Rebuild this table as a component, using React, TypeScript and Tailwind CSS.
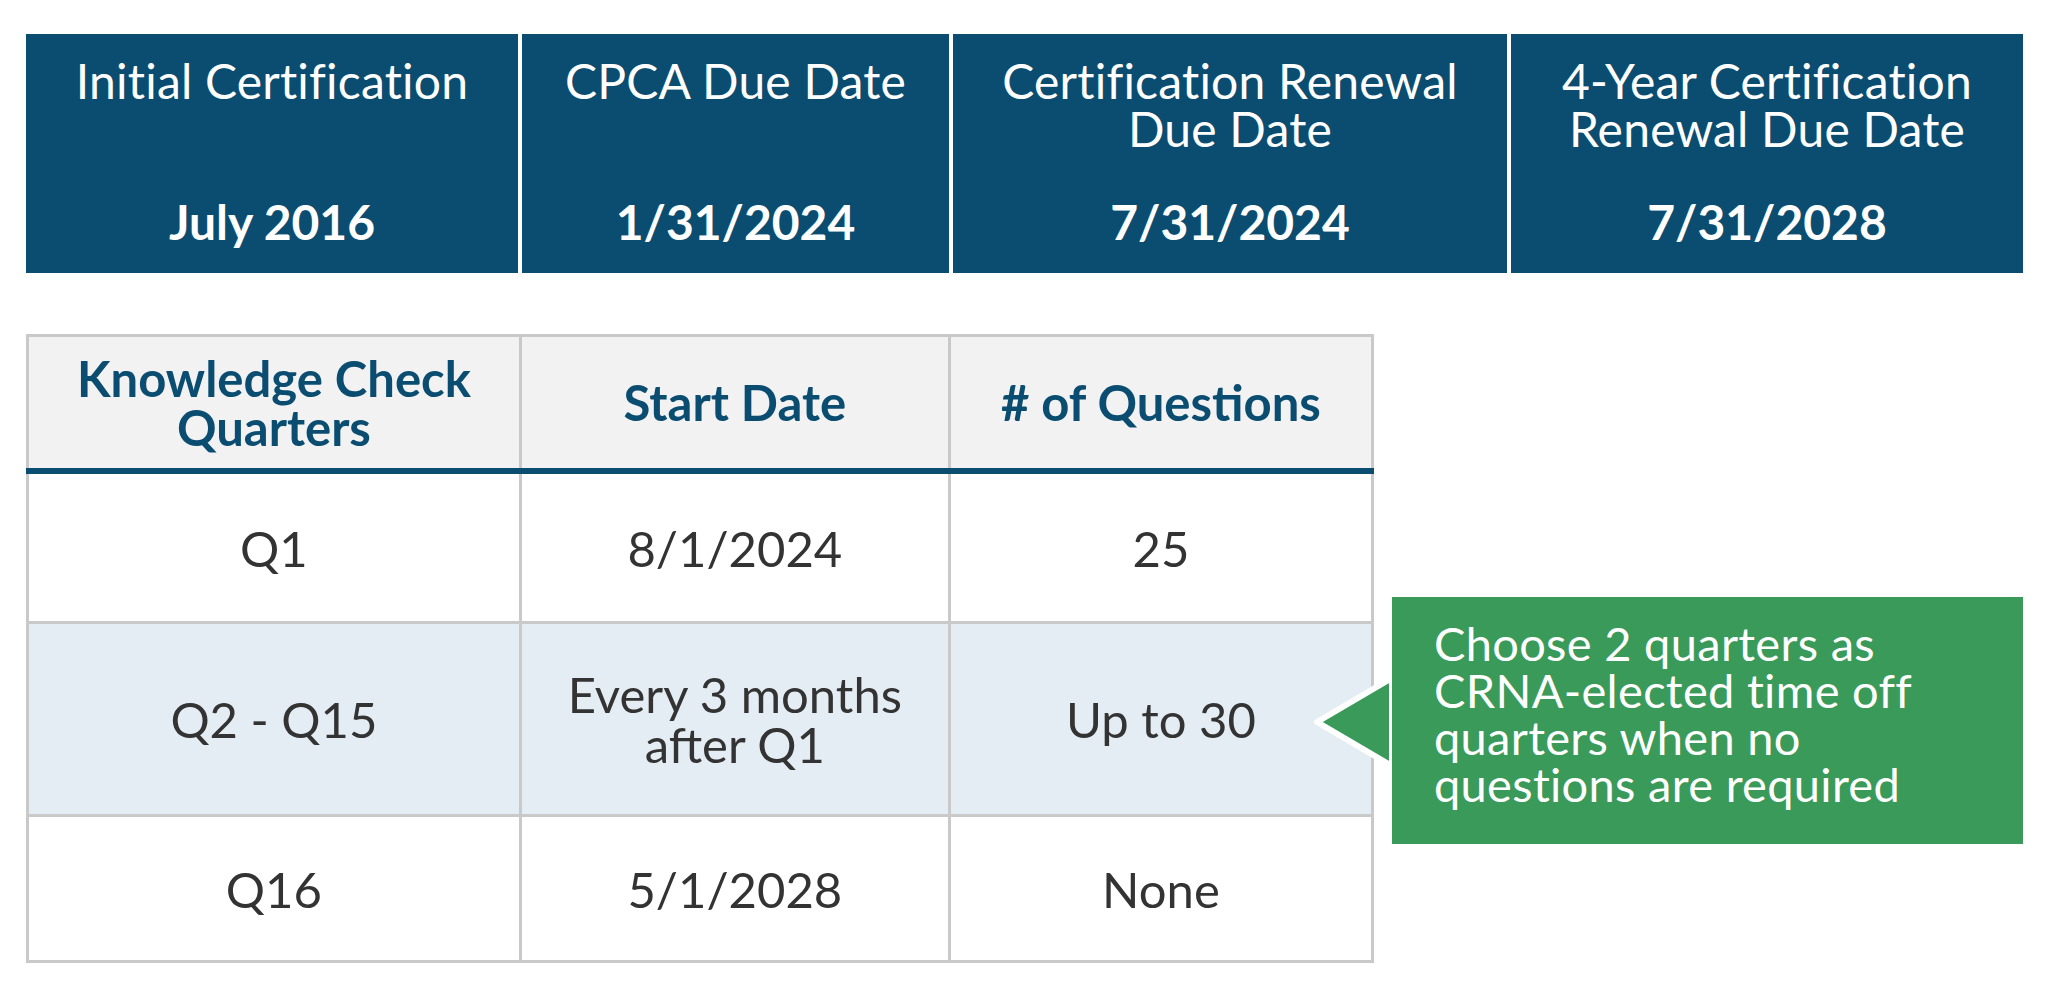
const NAVY = 'bg-[#0b4d71]';

const topCols = [
  { title: ['Initial Certification'], date: 'July 2016', w: 'w-[492px]' },
  { title: ['CPCA Due Date'], date: '1/31/2024', w: 'w-[431px]' },
  { title: ['Certification Renewal', 'Due Date'], date: '7/31/2024', w: 'w-[558px]' },
  { title: ['4-Year Certification', 'Renewal Due Date'], date: '7/31/2028', w: 'w-[516px]' },
];

const rows = [
  { q: 'Q1', start: ['8/1/2024'], n: '25', bg: 'bg-white', h: 'h-[147px]' },
  { q: 'Q2 - Q15', start: ['Every 3 months', 'after Q1'], n: 'Up to 30', bg: 'bg-[#e4edf3]', h: 'h-[193px]' },
  { q: 'Q16', start: ['5/1/2028'], n: 'None', bg: 'bg-white', h: 'h-[146px]' },
];

const colW = ['w-[492px]', 'w-[431px]', 'w-[425px]'];

export default function App() {
  return (
    <div
      className="min-h-[1005px] w-[2048px] bg-white pl-[26px] pt-[34px]"
      style={{ fontFamily: 'Lato, "Open Sans", sans-serif' }}
    >
      {/* due dates */}
      <div className="flex h-[239px] w-[1997px]">
        {topCols.map((c, i) => (
          <div
            key={c.date}
            className={`${c.w} ${NAVY} flex flex-col items-center text-center text-white ${i > 0 ? 'border-l-[4px] border-white' : ''}`}
          >
            <div className="h-[121px] pt-[23px] text-[48px] leading-[48px] tracking-[0.2px]">
              {c.title.map((t) => (
                <div key={t}>{t}</div>
              ))}
            </div>
            <div className="mt-[43px] text-[48px] font-bold leading-[48px]">{c.date}</div>
          </div>
        ))}
      </div>

      <div className="mt-[61px] flex items-start">
        {/* knowledge check table */}
        <div className="w-[1348px] border-[3px] border-[#c9c9c9]">
          <div className="flex h-[131px] bg-[#f2f2f2] text-[49px] font-bold leading-[49px] text-[#0b4d71]">
            <div className={`${colW[0]} flex flex-col items-center justify-center text-center`}>
              <div>Knowledge Check</div>
              <div>Quarters</div>
            </div>
            <div className={`${colW[1]} flex items-center justify-center border-l-[3px] border-[#c9c9c9]`}>Start Date</div>
            <div className={`${colW[2]} flex items-center justify-center border-l-[3px] border-[#c9c9c9]`}># of Questions</div>
          </div>
          <div className="-mx-[3px] h-[6px] bg-[#0b4d71]" />
          {rows.map((r, i) => (
            <div
              key={r.q}
              className={`flex ${r.h} ${r.bg} text-[49px] leading-[50px] text-[#333333] ${i > 0 ? 'border-t-[3px] border-[#c9c9c9]' : ''}`}
            >
              <div className={`${colW[0]} flex items-center justify-center`}>{r.q}</div>
              <div className={`${colW[1]} flex flex-col items-center justify-center border-l-[3px] border-[#c9c9c9]`}>
                {r.start.map((s) => (
                  <div key={s}>{s}</div>
                ))}
              </div>
              <div className={`${colW[2]} flex items-center justify-center border-l-[3px] border-[#c9c9c9]`}>{r.n}</div>
            </div>
          ))}
        </div>

        {/* callout */}
        <div className="relative ml-[18px] mt-[263px] flex h-[247px] w-[631px] items-center bg-[#3a9a5a] pl-[42px] text-[47px] leading-[47px] tracking-[0.3px] text-white">
          <svg className="absolute left-[-80px] top-[78px]" width="86" height="94" viewBox="0 0 86 94">
            <polygon points="80,3 5,47 80,91" fill="#3a9a5a" stroke="#ffffff" strokeWidth="6" strokeLinejoin="round" />
            <rect x="80" y="0" width="6" height="94" fill="#3a9a5a" />
          </svg>
          <div className="-mt-[14px]">
            <div>Choose 2 quarters as</div>
            <div>CRNA-elected time off</div>
            <div>quarters when no</div>
            <div>questions are required</div>
          </div>
        </div>
      </div>
    </div>
  );
}
